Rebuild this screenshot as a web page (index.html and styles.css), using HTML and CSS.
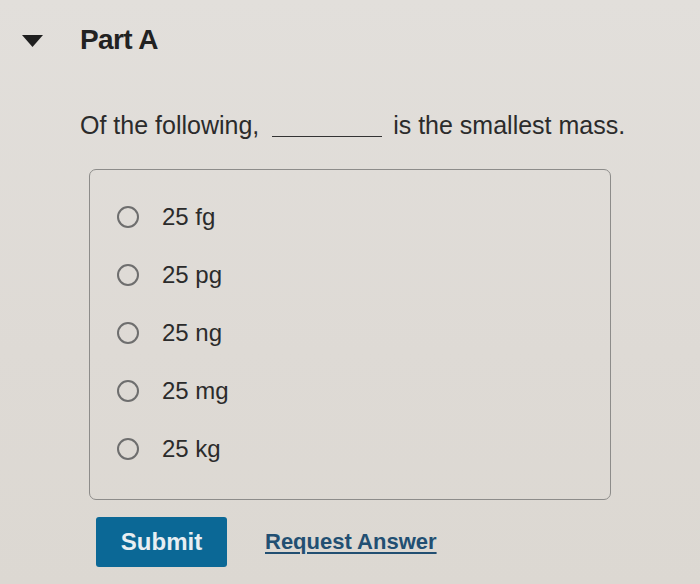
FILE: index.html
```html
<!DOCTYPE html>
<html>
<head>
<meta charset="utf-8">
<link rel="stylesheet" href="styles.css">
</head>
<body>
<div class="page">
  <div class="part-header">
    <svg class="caret" width="21" height="12" viewBox="0 0 21 12"><polygon points="0,0 21,0 10.5,12" fill="#1f1f1f"/></svg>
    <h2 class="part-title">Part A</h2>
  </div>
  <p class="question">Of the following, <span class="blank"></span> is the smallest mass.</p>
  <div class="choices">
    <label class="choice"><span class="radio"></span><span class="choice-text">25 fg</span></label>
    <label class="choice"><span class="radio"></span><span class="choice-text">25 pg</span></label>
    <label class="choice"><span class="radio"></span><span class="choice-text">25 ng</span></label>
    <label class="choice"><span class="radio"></span><span class="choice-text">25 mg</span></label>
    <label class="choice"><span class="radio"></span><span class="choice-text">25 kg</span></label>
  </div>
  <div class="actions">
    <button class="submit">Submit</button>
    <a class="request" href="#">Request Answer</a>
  </div>
</div>
</body>
</html>
```
FILE: styles.css
```css
html, body {
  margin: 0;
  padding: 0;
}
body {
  width: 700px;
  height: 584px;
  overflow: hidden;
  background: linear-gradient(180deg, #e2dfdb 0%, #dedad5 60%, #dcd8d2 100%);
  font-family: "Liberation Sans", Arial, sans-serif;
  color: #2a2a2a;
}
.page {
  padding-top: 24px;
}
.part-header {
  display: flex;
  align-items: center;
  height: 32px;
}
.caret {
  margin-left: 22px;
  margin-right: 37px;
  margin-top: 1px;
}
.part-title {
  margin: 0;
  font-size: 28px;
  font-weight: bold;
  letter-spacing: -0.6px;
  color: #222;
}
.question {
  margin: 54px 0 0 80px;
  font-size: 25px;
  line-height: 30px;
  color: #2b2b2b;
}
.blank {
  display: inline-block;
  width: 110px;
  border-bottom: 1.5px solid #333;
  margin: 0 4px 0 6px;
  vertical-align: -3px;
}
.choices {
  margin: 29px 0 0 89px;
  width: 522px;
  height: 331px;
  border: 1.5px solid #8d8c8a;
  border-radius: 7px;
  box-sizing: border-box;
  padding-top: 34px;
  display: flex;
  flex-direction: column;
  gap: 32px;
}
.choice {
  display: flex;
  align-items: center;
  height: 26px;
  padding-left: 27px;
}
.radio {
  width: 22px;
  height: 22px;
  border: 2px solid #6e6e6e;
  border-radius: 50%;
  box-sizing: border-box;
  margin-right: 23px;
  flex: none;
}
.choice-text {
  font-size: 24px;
  color: #2b2b2b;
}
.actions {
  display: flex;
  align-items: center;
  margin: 17px 0 0 96px;
}
.submit {
  width: 131px;
  height: 50px;
  background: #0b6896;
  border: none;
  border-radius: 3px;
  color: #e8eef2;
  font-family: "Liberation Sans", Arial, sans-serif;
  font-size: 24px;
  font-weight: bold;
  padding: 0;
}
.request {
  margin-left: 38px;
  font-size: 22px;
  font-weight: bold;
  color: #224f72;
  text-decoration: underline;
  text-underline-offset: 3px;
}
```
